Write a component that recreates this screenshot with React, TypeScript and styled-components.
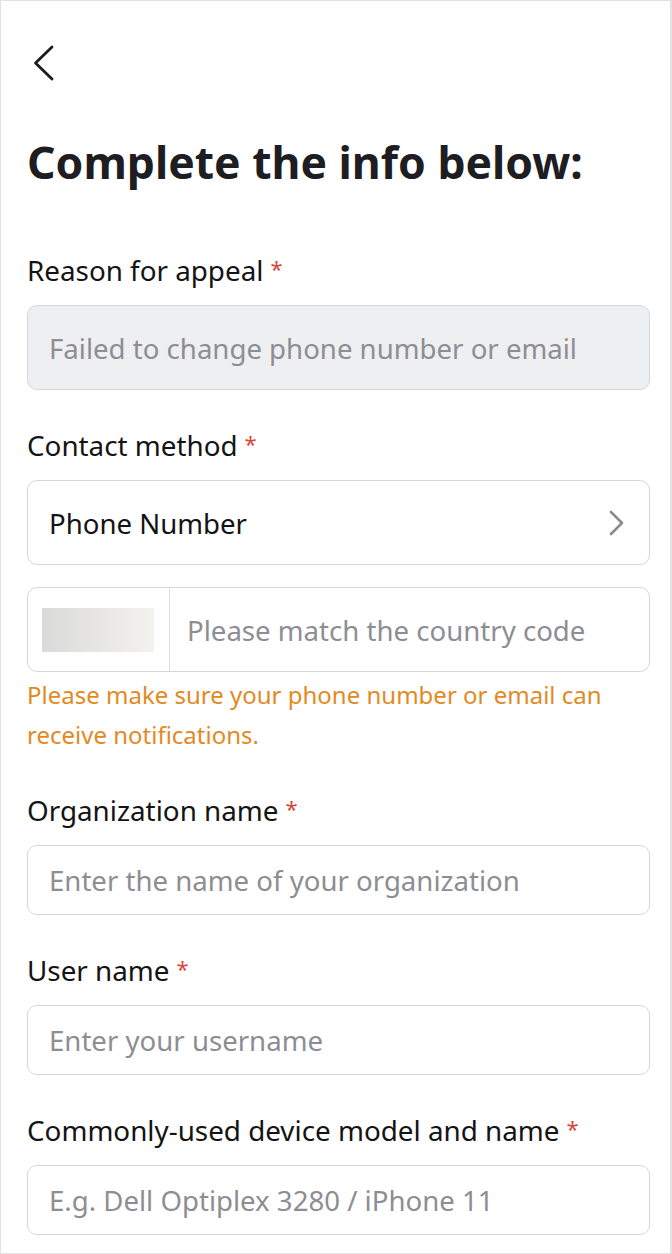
import styled, { createGlobalStyle } from "styled-components";

const GlobalStyle = createGlobalStyle`
  * {
    box-sizing: border-box;
  }
  body {
    margin: 0;
    background: #ffffff;
    font-family: "Noto Sans", "Open Sans", sans-serif;
    color: #151518;
  }
`;

const Page = styled.div`
  width: 672px;
  min-height: 1254px;
  border: 1px solid #e2e2e4;
  border-right-width: 2px;
  padding: 0 20px 0 26px;
  background: #ffffff;
`;

const Header = styled.header`
  padding-top: 42px;
  height: 82px;
`;

const BackButton = styled.button`
  display: block;
  width: 40px;
  height: 40px;
  padding: 0;
  border: none;
  background: transparent;
  cursor: pointer;
`;

const Title = styled.h1`
  margin: 53px 0 0;
  font-size: 44.5px;
  line-height: 52px;
  font-weight: 700;
  color: #1d1d22;
`;

const Form = styled.form`
  display: flex;
  flex-direction: column;
  margin-top: 65px;
`;

const Field = styled.div<{ $gap?: number }>`
  display: flex;
  flex-direction: column;
  margin-top: ${(p) => p.$gap ?? 38}px;
  &:first-child {
    margin-top: 0;
  }
`;

const Label = styled.label`
  font-size: 27.8px;
  line-height: 34px;
  height: 34px;
  color: #141414;
  margin-bottom: 18px;
  white-space: nowrap;
`;

const Star = styled.span`
  color: #d8463c;
  font-size: 22px;
  line-height: 0;
  margin-left: 7px;
  vertical-align: 4px;
`;

const Box = styled.div<{ $tall?: boolean; $disabled?: boolean }>`
  display: flex;
  align-items: center;
  height: ${(p) => (p.$tall ? 85 : 70)}px;
  border: 1px solid #d5d6da;
  border-radius: 10px;
  background: ${(p) => (p.$disabled ? "#eeeff1" : "#ffffff")};
  overflow: hidden;
`;

const Input = styled.input`
  flex: 1;
  min-width: 0;
  height: 100%;
  border: none;
  outline: none;
  background: transparent;
  padding: 0 0 0 21px;
  font-family: inherit;
  font-size: 27.6px;
  color: #141414;
  &::placeholder {
    color: #8d8e94;
  }
  &:disabled {
    color: #8d8e94;
  }
`;

const SelectText = styled.span`
  flex: 1;
  padding-left: 21px;
  font-size: 27.6px;
  color: #141414;
`;

const Chevron = styled.svg`
  margin-right: 24px;
`;

const PhoneBox = styled(Box)`
  margin-top: 22px;
`;

const CodePart = styled.div`
  display: flex;
  align-items: center;
  width: 142px;
  height: 100%;
  padding-left: 14px;
  border-right: 1px solid #dedfe2;
`;

const CodeBlur = styled.div`
  width: 112px;
  height: 44px;
  background: linear-gradient(to right, #dadada, #f3f2ef);
`;

const PhoneInput = styled(Input)`
  padding-left: 17px;
`;

const Hint = styled.p`
  margin: 3px 0 0;
  font-size: 24px;
  line-height: 40px;
  color: #e38a1f;
`;

const fields = [
  { label: "Organization name", placeholder: "Enter the name of your organization" },
  { label: "User name", placeholder: "Enter your username" },
  {
    label: "Commonly-used device model and name",
    placeholder: "E.g. Dell Optiplex 3280 / iPhone 11",
  },
];

export default function App() {
  return (
    <>
      <GlobalStyle />
      <Page>
        <Header>
          <BackButton type="button" aria-label="Back">
            <svg width="40" height="40" viewBox="0 0 40 40" fill="none">
              <path
                d="M25 4 L8.5 20 L25 36"
                stroke="#1c1c1e"
                strokeWidth="2.8"
                strokeLinecap="round"
                strokeLinejoin="round"
              />
            </svg>
          </BackButton>
        </Header>
        <Title>Complete the info below:</Title>
        <Form onSubmit={(e) => e.preventDefault()}>
          <Field>
            <Label>
              Reason for appeal<Star>*</Star>
            </Label>
            <Box $tall $disabled>
              <Input disabled value="Failed to change phone number or email" readOnly />
            </Box>
          </Field>
          <Field>
            <Label>
              Contact method<Star>*</Star>
            </Label>
            <Box $tall>
              <SelectText>Phone Number</SelectText>
              <Chevron width="16" height="26" viewBox="0 0 16 26" fill="none">
                <path
                  d="M2 2 L13 13 L2 24"
                  stroke="#8a8b90"
                  strokeWidth="2.6"
                  strokeLinecap="round"
                  strokeLinejoin="round"
                />
              </Chevron>
            </Box>
            <PhoneBox $tall>
              <CodePart>
                <CodeBlur />
              </CodePart>
              <PhoneInput placeholder="Please match the country code" />
            </PhoneBox>
            <Hint>
              Please make sure your phone number or email can receive notifications.
            </Hint>
          </Field>
          {fields.map((f) => (
            <Field key={f.label}>
              <Label>
                {f.label}
                <Star>*</Star>
              </Label>
              <Box>
                <Input placeholder={f.placeholder} />
              </Box>
            </Field>
          ))}
        </Form>
      </Page>
    </>
  );
}
